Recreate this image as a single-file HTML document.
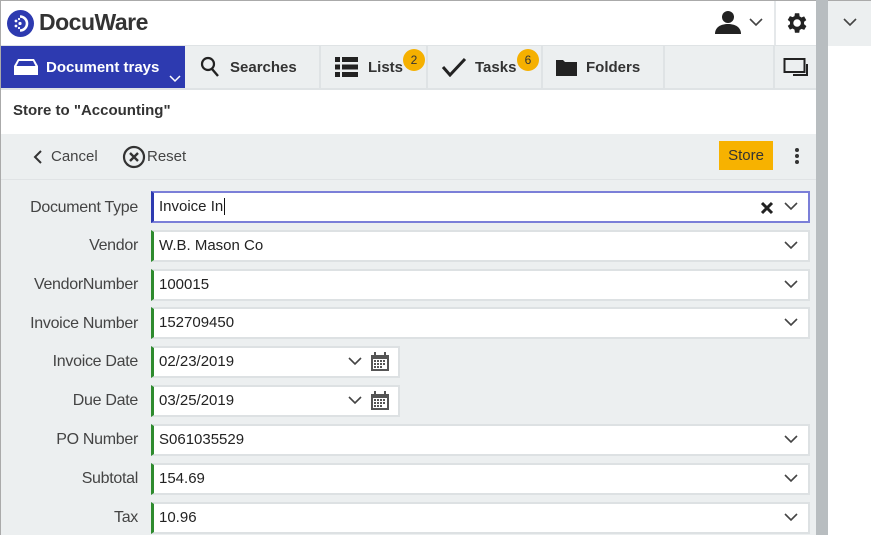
<!DOCTYPE html>
<html><head><meta charset="utf-8"><style>
*{margin:0;padding:0;box-sizing:border-box}
body{width:871px;height:535px;overflow:hidden;background:#fff;font-family:"Liberation Sans",sans-serif;position:relative}
.a{position:absolute}
.tab{position:absolute;top:46px;height:42px;background:#eceff0;border-right:2px solid #dfe3e5;font-weight:bold;font-size:15px;color:#333;display:flex;align-items:center}
.lbl{position:absolute;right:733px;font-size:16px;color:#444;text-align:right;white-space:nowrap;letter-spacing:-0.3px}
.f{position:absolute;left:151px;width:659px;height:32px;background:#fff;border:2px solid #dde1e3;border-left:3px solid #2e8b2e;font-size:15px;color:#222;padding-left:5px;line-height:28px}
.chev{position:absolute;right:10px;top:9px}
.badge{position:absolute;width:22px;height:22px;border-radius:11px;background:#f5b000;font-size:12px;font-weight:normal;color:#333;text-align:center;line-height:22px}
</style></head><body>
<div class="a" style="left:0;top:0;width:871px;height:1px;background:#aaa"></div>
<div class="a" style="left:0;top:0;width:1px;height:535px;background:#aaa"></div>
<!-- header -->
<svg class="a" style="left:7px;top:10px" width="27" height="27" viewBox="0 0 27 27"><circle cx="13.5" cy="13.5" r="13.5" fill="#2d3ab0"/><path d="M13 6.5a7 7 0 0 1 0 14" stroke="#fff" stroke-width="2.6" fill="none"/><circle cx="13" cy="13.5" r="1.6" fill="#fff"/><circle cx="9" cy="11" r="1.4" fill="#fff"/><circle cx="9" cy="16" r="1.4" fill="#fff"/><circle cx="12" cy="9" r="1.1" fill="#fff"/><circle cx="12" cy="18" r="1.1" fill="#fff"/></svg>
<div class="a" style="left:39px;top:9px;font-size:23px;font-weight:bold;color:#333;letter-spacing:-0.5px">DocuWare</div>
<svg class="a" style="left:714px;top:10px" width="28" height="25" viewBox="0 0 28 25"><circle cx="14" cy="7" r="6" fill="#222"/><path d="M1 24c0-7 6-10 13-10s13 3 13 10z" fill="#222"/></svg>
<svg class="a" style="left:748px;top:17px" width="16" height="10"><path d="M2 2l6 6 6-6" stroke="#444" stroke-width="1.6" fill="none"/></svg>
<div class="a" style="left:774px;top:1px;width:2px;height:45px;background:#e5e8ea"></div>
<svg class="a" style="left:783px;top:10px" width="26" height="26" viewBox="0 0 24 24"><path fill="#222" d="M19.4 13a7.5 7.5 0 0 0 0-2l2.1-1.6-2-3.5-2.5 1a7.4 7.4 0 0 0-1.7-1L15 3h-4l-.4 2.6a7.4 7.4 0 0 0-1.7 1l-2.5-1-2 3.5L6.5 11a7.5 7.5 0 0 0 0 2l-2.1 1.6 2 3.5 2.5-1a7.4 7.4 0 0 0 1.7 1L11 21h4l.4-2.6a7.4 7.4 0 0 0 1.7-1l2.5 1 2-3.5zM13 15.5a3.5 3.5 0 1 1 0-7 3.5 3.5 0 0 1 0 7z"/></svg>
<div class="a" style="left:816px;top:0;width:12px;height:535px;background:#b8bdc0"></div>
<div class="a" style="left:828px;top:1px;width:43px;height:45px;background:#eceff0"></div>
<svg class="a" style="left:842px;top:17px" width="16" height="10"><path d="M2 2l6 6 6-6" stroke="#444" stroke-width="1.6" fill="none"/></svg>
<!-- nav -->
<div class="a" style="left:1px;top:45px;width:815px;height:1px;background:#dfe3e5"></div>
<div class="tab" style="left:1px;width:184px;background:#2d3ab0;color:#fff;border:none">
<svg style="margin-left:12px" width="26" height="20" viewBox="0 0 26 20"><path d="M5 2h16l4 7v9H1V9z" fill="#fff"/><path d="M6 4h14l2.5 5h-19z" fill="#2d3ab0"/></svg>
<span style="margin-left:7px">Document trays</span>
<svg class="a" style="left:168px;top:29px" width="12" height="8"><path d="M1 1l5 5 5-5" stroke="#fff" stroke-width="1.5" fill="none"/></svg></div>
<div class="tab" style="left:185px;width:136px"><svg style="margin-left:15px" width="20" height="22" viewBox="0 0 20 22"><circle cx="8" cy="8" r="6" stroke="#222" stroke-width="2.2" fill="none"/><path d="M12 13l6 7" stroke="#222" stroke-width="2.4"/></svg><span style="margin-left:10px">Searches</span></div>
<div class="tab" style="left:321px;width:107px"><svg style="margin-left:14px" width="23" height="22" viewBox="0 0 23 22"><g fill="#222"><rect x="0" y="1" width="5" height="5"/><rect x="7" y="1" width="16" height="5"/><rect x="0" y="8.5" width="5" height="5"/><rect x="7" y="8.5" width="16" height="5"/><rect x="0" y="16" width="5" height="5"/><rect x="7" y="16" width="16" height="5"/></g></svg><span style="margin-left:10px">Lists</span><div class="badge" style="left:82px;top:3px">2</div></div>
<div class="tab" style="left:428px;width:115px"><svg style="margin-left:13px" width="26" height="20" viewBox="0 0 26 20"><path d="M2 10l7 8L24 2" stroke="#222" stroke-width="3" fill="none"/></svg><span style="margin-left:8px">Tasks</span><div class="badge" style="left:89px;top:3px">6</div></div>
<div class="tab" style="left:543px;width:122px"><svg style="margin-left:13px" width="21" height="17" viewBox="0 0 21 17"><path d="M0 1h7l2 2h12v14H0z" fill="#222"/></svg><span style="margin-left:9px">Folders</span></div>
<div class="tab" style="left:665px;width:110px"></div>
<div class="tab" style="left:775px;width:41px;border:none"><svg style="margin-left:8px" width="26" height="22" viewBox="0 0 26 22"><rect x="1.5" y="3" width="20" height="13" stroke="#222" stroke-width="2" fill="none"/><path d="M24 8v11H10" stroke="#222" stroke-width="2" fill="none"/></svg></div>
<div class="a" style="left:1px;top:88px;width:815px;height:2px;background:#dfe3e5"></div>
<!-- title -->
<div class="a" style="left:13px;top:102px;font-size:15px;font-weight:bold;color:#333">Store to "Accounting"</div>
<!-- toolbar -->
<div class="a" style="left:1px;top:134px;width:815px;height:401px;background:#eceff0"></div>
<div class="a" style="left:1px;top:179px;width:815px;height:1px;background:#e0e3e5"></div>
<svg class="a" style="left:33px;top:150px" width="10" height="14"><path d="M8 1L2 7l6 6" stroke="#333" stroke-width="2" fill="none"/></svg>
<div class="a" style="left:51px;top:148px;font-size:15px;color:#444">Cancel</div>
<svg class="a" style="left:122px;top:145px" width="24" height="24"><circle cx="12" cy="12" r="10" stroke="#333" stroke-width="2.2" fill="none"/><path d="M8 8l8 8M16 8l-8 8" stroke="#333" stroke-width="2.4"/></svg>
<div class="a" style="left:147px;top:148px;font-size:15px;color:#444">Reset</div>
<div class="a" style="left:719px;top:141px;width:54px;height:29px;background:#f7b200;font-size:15px;color:#333;text-align:center;line-height:29px">Store</div>
<svg class="a" style="left:793px;top:147px" width="8" height="18"><circle cx="4" cy="3" r="2" fill="#333"/><circle cx="4" cy="9" r="2" fill="#333"/><circle cx="4" cy="15" r="2" fill="#333"/></svg>
<!-- form -->
<div class="lbl" style="top:199px">Document Type</div>
<div class="f" style="top:191px;border-color:#7b7fd8;border-left:3px solid #2d3ab0"><span style="border-right:1.5px solid #111;padding-right:1px">Invoice In</span>
<svg class="a" style="right:34px;top:8px" width="14" height="14"><path d="M2 2l10 10M12 2L2 12" stroke="#222" stroke-width="3"/></svg>
<svg class="chev" width="14" height="9"><path d="M1 1l6 6 6-6" stroke="#444" stroke-width="1.6" fill="none"/></svg></div>
<div class="lbl" style="top:237px">Vendor</div>
<div class="f" style="top:230px">W.B. Mason Co<svg class="chev" width="14" height="9"><path d="M1 1l6 6 6-6" stroke="#444" stroke-width="1.6" fill="none"/></svg></div>
<div class="lbl" style="top:276px">VendorNumber</div>
<div class="f" style="top:269px">100015<svg class="chev" width="14" height="9"><path d="M1 1l6 6 6-6" stroke="#444" stroke-width="1.6" fill="none"/></svg></div>
<div class="lbl" style="top:315px">Invoice Number</div>
<div class="f" style="top:307px">152709450<svg class="chev" width="14" height="9"><path d="M1 1l6 6 6-6" stroke="#444" stroke-width="1.6" fill="none"/></svg></div>
<div class="lbl" style="top:353px">Invoice Date</div>
<div class="f" style="top:346px;width:249px">02/23/2019<svg class="a" style="right:36px;top:9px" width="14" height="9"><path d="M1 1l6 6 6-6" stroke="#444" stroke-width="1.6" fill="none"/></svg><svg class="a" style="right:8px;top:4px" width="20" height="20" viewBox="0 0 20 20"><rect x="1" y="3" width="18" height="16" fill="#555"/><rect x="3" y="7" width="14" height="10" fill="#fff"/><g fill="#555"><rect x="4" y="8" width="2" height="2"/><rect x="7" y="8" width="2" height="2"/><rect x="10" y="8" width="2" height="2"/><rect x="13" y="8" width="2" height="2"/><rect x="4" y="11" width="2" height="2"/><rect x="7" y="11" width="2" height="2"/><rect x="10" y="11" width="2" height="2"/><rect x="13" y="11" width="2" height="2"/><rect x="4" y="14" width="2" height="2"/><rect x="7" y="14" width="2" height="2"/><rect x="10" y="14" width="2" height="2"/></g><rect x="4" y="0" width="2" height="4" fill="#555"/><rect x="14" y="0" width="2" height="4" fill="#555"/></svg></div>
<div class="lbl" style="top:392px">Due Date</div>
<div class="f" style="top:385px;width:249px">03/25/2019<svg class="a" style="right:36px;top:9px" width="14" height="9"><path d="M1 1l6 6 6-6" stroke="#444" stroke-width="1.6" fill="none"/></svg><svg class="a" style="right:8px;top:4px" width="20" height="20" viewBox="0 0 20 20"><rect x="1" y="3" width="18" height="16" fill="#555"/><rect x="3" y="7" width="14" height="10" fill="#fff"/><g fill="#555"><rect x="4" y="8" width="2" height="2"/><rect x="7" y="8" width="2" height="2"/><rect x="10" y="8" width="2" height="2"/><rect x="13" y="8" width="2" height="2"/><rect x="4" y="11" width="2" height="2"/><rect x="7" y="11" width="2" height="2"/><rect x="10" y="11" width="2" height="2"/><rect x="13" y="11" width="2" height="2"/><rect x="4" y="14" width="2" height="2"/><rect x="7" y="14" width="2" height="2"/><rect x="10" y="14" width="2" height="2"/></g><rect x="4" y="0" width="2" height="4" fill="#555"/><rect x="14" y="0" width="2" height="4" fill="#555"/></svg></div>
<div class="lbl" style="top:431px">PO Number</div>
<div class="f" style="top:424px">S061035529<svg class="chev" width="14" height="9"><path d="M1 1l6 6 6-6" stroke="#444" stroke-width="1.6" fill="none"/></svg></div>
<div class="lbl" style="top:470px">Subtotal</div>
<div class="f" style="top:463px">154.69<svg class="chev" width="14" height="9"><path d="M1 1l6 6 6-6" stroke="#444" stroke-width="1.6" fill="none"/></svg></div>
<div class="lbl" style="top:509px">Tax</div>
<div class="f" style="top:502px">10.96<svg class="chev" width="14" height="9"><path d="M1 1l6 6 6-6" stroke="#444" stroke-width="1.6" fill="none"/></svg></div>
</body></html>
